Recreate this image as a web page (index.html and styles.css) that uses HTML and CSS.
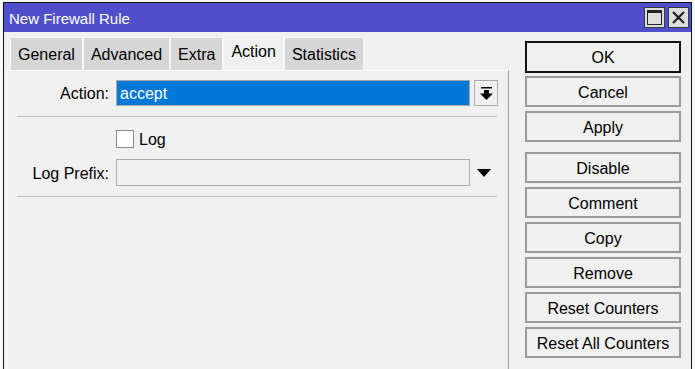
FILE: index.html
```html
<!DOCTYPE html>
<html lang="en">
<head>
    <meta charset="UTF-8">
    <title>New Firewall Rule</title>
    <link rel="stylesheet" href="styles.css">
</head>
<body>

    <div class="window">
        <div class="titlebar">
            <span class="title">New Firewall Rule</span>
            <div class="title-buttons">
                <div class="tbtn">
                    <svg width="15" height="15" viewBox="0 0 15 15">
                        <rect x="0.5" y="0.5" width="14" height="14" fill="none" stroke="#222" stroke-width="1"/>
                        <rect x="0" y="0" width="15" height="3" fill="#222"/>
                    </svg>
                </div>
                <div class="tbtn">
                    <svg width="13" height="13" viewBox="0 0 13 13">
                        <path d="M1 1 L12 12 M12 1 L1 12" stroke="#222" stroke-width="2.2"/>
                    </svg>
                </div>
            </div>
        </div>

        <div class="body">
            <div class="left">
                <div class="tabs">
                    <div class="tab">General</div>
                    <div class="tab">Advanced</div>
                    <div class="tab">Extra</div>
                    <div class="tab active">Action</div>
                    <div class="tab">Statistics</div>
                </div>

                <div class="panel">
                    <div class="row row-action">
                        <span class="label">Action:</span>
                        <div class="select">accept</div>
                        <div class="drop">
                            <svg width="13" height="13" viewBox="0 0 13 13">
                                <rect x="1" y="0" width="11" height="1.5" fill="#000"/>
                                <rect x="4" y="3" width="5" height="4" fill="#000"/>
                                <path d="M0 6.5 L13 6.5 L6.5 13 Z" fill="#000"/>
                            </svg>
                        </div>
                    </div>
                    <div class="sep"></div>

                    <div class="row row-check">
                        <span class="label"></span>
                        <span class="checkbox"></span>
                        <span class="check-text">Log</span>
                    </div>

                    <div class="row row-prefix">
                        <span class="label">Log Prefix:</span>
                        <div class="input"></div>
                        <span class="arrow"></span>
                    </div>
                    <div class="sep"></div>
                </div>
            </div>

            <div class="actions">
                <button class="btn default">OK</button>
                <button class="btn">Cancel</button>
                <button class="btn">Apply</button>
                <button class="btn spaced">Disable</button>
                <button class="btn">Comment</button>
                <button class="btn">Copy</button>
                <button class="btn">Remove</button>
                <button class="btn">Reset Counters</button>
                <button class="btn">Reset All Counters</button>
            </div>
        </div>
    </div>

</body>
</html>
```

FILE: styles.css
```css
html, body {
    height: 100%;
}

body {
    margin: 0;
    padding: 2px 0 0 3px;
    background-color: #f7f8fa;
    font-family: 'Liberation Sans', Arial, sans-serif;
    font-size: 16px;
    color: #000;
    overflow: hidden;
    box-sizing: border-box;
}

.window {
    width: 689px;
    height: 367px;
    overflow: hidden;
    border: 1px solid #111;
    border-bottom: none;
    box-sizing: border-box;
    background-color: #f0f0f0;
}

.titlebar {
    height: 29px;
    background-color: #4f4fcb;
    display: flex;
    align-items: center;
    justify-content: space-between;
    padding: 0 2px 0 5px;
}

.title {
    color: #fff;
    font-size: 15px;
    padding-top: 1px;
}

.title-buttons {
    display: flex;
    gap: 3px;
}

.tbtn {
    width: 21px;
    height: 21px;
    box-sizing: border-box;
    border: 1px solid #3a3a3a;
    background-color: #dedede;
    display: flex;
    align-items: center;
    justify-content: center;
}

.body {
    display: flex;
    padding: 2px 0 0 2px;
}

.left {
    width: 503px;
}

.tabs {
    display: flex;
    align-items: flex-end;
    margin-left: 4px;
    height: 36px;
}

.tab {
    height: 33px;
    box-sizing: border-box;
    padding: 2px 7px 0;
    background-color: #d6d6d6;
    border: 1px solid #f6f6f6;
    border-bottom: none;
    display: flex;
    align-items: center;
}

.tab.active {
    height: 36px;
    background-color: #f0f0f0;
    padding-top: 0;
    padding-bottom: 2px;
}

.panel {
    height: 320px;
    box-sizing: border-box;
    border-top: 1px solid #fafafa;
    border-left: 1px solid #fafafa;
    border-right: 1px solid #a0a0a0;
    padding-top: 9px;
}

.row {
    display: flex;
    align-items: center;
}

.label {
    width: 102px;
    margin-right: 7px;
    padding-top: 2px;
    text-align: right;
    flex-shrink: 0;
}

.row-action {
    height: 26px;
}

.select {
    width: 354px;
    height: 26px;
    box-sizing: border-box;
    border: 1px solid #a8a8a8;
    background-color: #0078d7;
    color: #fff;
    padding: 2px 3px 0;
    display: flex;
    align-items: center;
}

.drop {
    width: 24px;
    height: 26px;
    box-sizing: border-box;
    margin-left: 4px;
    border: 1px solid #a8a8a8;
    display: flex;
    align-items: center;
    justify-content: center;
}

.sep {
    margin: 10px 0 0 10px;
    width: 480px;
    height: 1px;
    background-color: #bcbcbc;
}

.row-check {
    margin-top: 13px;
    height: 18px;
}

.checkbox {
    width: 18px;
    height: 18px;
    box-sizing: border-box;
    border: 1px solid #8a8a8a;
    background-color: #fff;
}

.check-text {
    margin-left: 5px;
    padding-top: 2px;
}

.row-prefix {
    margin-top: 11px;
    height: 27px;
}

.input {
    width: 354px;
    height: 27px;
    box-sizing: border-box;
    border: 1px solid #a8a8a8;
}

.arrow {
    margin-left: 7px;
    width: 0;
    height: 0;
    border-left: 7px solid transparent;
    border-right: 7px solid transparent;
    border-top: 8px solid #000;
}

.actions {
    width: 156px;
    margin: 7px 0 0 16px;
    display: flex;
    flex-direction: column;
}

.btn {
    height: 31px;
    margin-bottom: 4px;
    background-color: #f0f0f0;
    border: 2px solid #9a9a9a;
    font-family: 'Liberation Sans', Arial, sans-serif;
    font-size: 16px;
    color: #000;
    padding: 2px 0 0;
}

.btn.default {
    height: 32px;
    margin-bottom: 3px;
    border-color: #111;
}

.btn.spaced {
    margin-top: 6px;
}
```
